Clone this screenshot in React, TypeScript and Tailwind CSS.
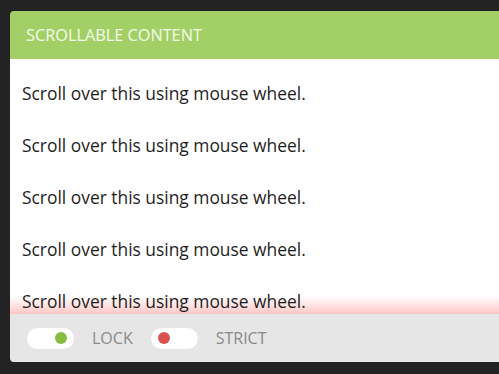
import React from "react"

function Toggle({ on, color }: { on: boolean; color: string }) {
  return (
    <div
      className={`flex h-[21px] w-[47px] shrink-0 items-center rounded-full bg-white px-[7px] ${
        on ? "justify-end" : "justify-start"
      }`}
    >
      <span className={`h-3 w-3 rounded-full ${color}`} />
    </div>
  )
}

export default function App() {
  const lines = Array.from({ length: 5 }, () => "Scroll over this using mouse wheel.")

  return (
    <div
      className="h-[374px] w-[499px] overflow-hidden bg-[#232323] pl-[10px] pt-[11px]"
      style={{ fontFamily: '"Open Sans", "Liberation Sans", sans-serif' }}
    >
      <div className="w-[560px] overflow-hidden rounded-[4px]">
        <div className="flex h-[48px] items-center bg-[#a3cf67] px-4 text-[16.3px] text-[#f4fbe9]">
          SCROLLABLE CONTENT
        </div>

        <div className="relative h-[255px] overflow-hidden bg-white">
          <div className="absolute inset-x-0 bottom-0 h-[18px] bg-gradient-to-b from-transparent to-[#ffc6c6]" />
          <div className="relative flex flex-col gap-[28px] px-3 pt-[22px]">
            {lines.map((l, i) => (
              <p key={i} className="text-[17.4px] leading-[24px] text-[#1e1e1e]">
                {l}
              </p>
            ))}
          </div>
        </div>

        <div className="flex h-[48px] items-center bg-[#e6e6e6] pl-[17px] text-[16px] leading-none text-[#8a8a8a]">
          <Toggle on color="bg-[#86bc3f]" />
          <span className="ml-[18px]">LOCK</span>
          <div className="ml-[18px]">
            <Toggle on={false} color="bg-[#d9534f]" />
          </div>
          <span className="ml-[18px]">STRICT</span>
        </div>
      </div>
    </div>
  )
}
